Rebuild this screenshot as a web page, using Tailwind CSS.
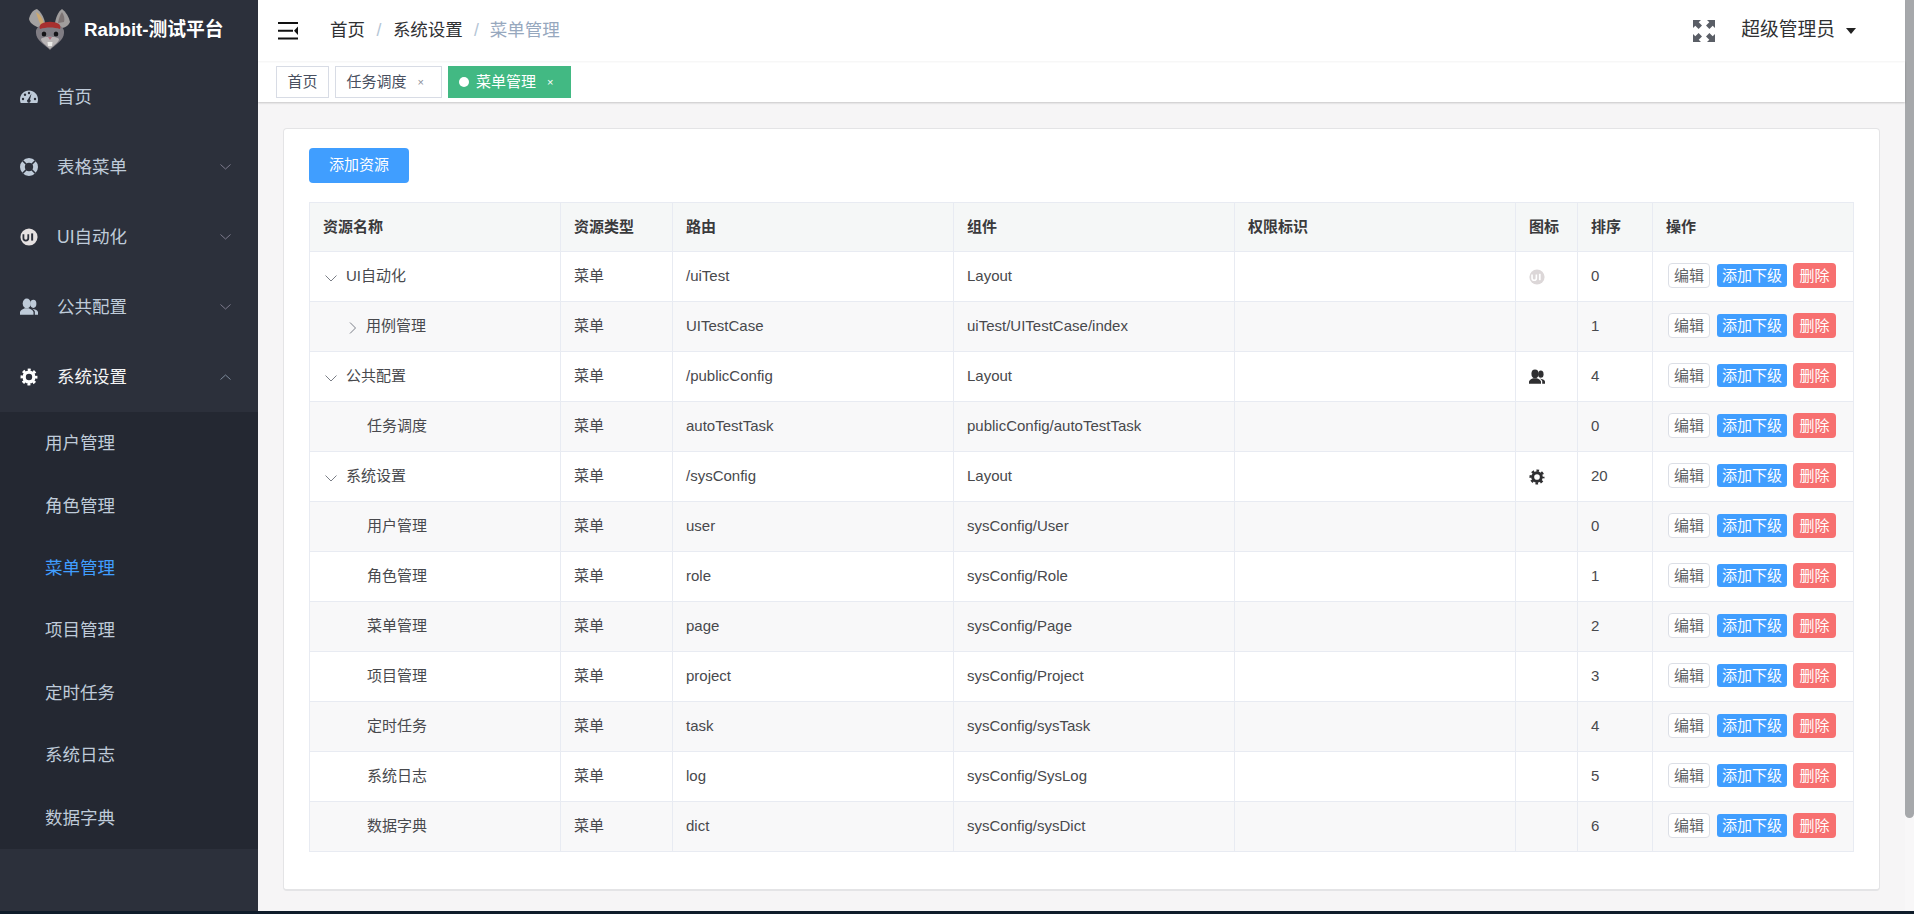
<!DOCTYPE html>
<html lang="zh-CN">
<head>
  <meta charset="UTF-8" />
  <title>Rabbit-测试平台</title>
  <script src="https://cdn.jsdelivr.net/npm/@tailwindcss/browser@4"></script>
</head>
<body class="h-[914px] overflow-hidden bg-[#0f1c2a] font-['Liberation_Sans','Noto_Sans_CJK_SC',sans-serif]">
  <svg class="hidden">
    <symbol id="i-users" viewBox="0 0 20 20">
      <ellipse cx="14.800" cy="6.500" rx="3.400" ry="4.500" />
      <path d="M13.500 12c3 .5 6 1.500 6.500 3.500v3h-3.500v-3.500c-.5-1-1.500-2-3-3z" />
      <ellipse cx="7.500" cy="6" rx="4.500" ry="5.500" />
      <path d="M0 18.500v-3c.5-2 3-3 5.300-4h4.400c2.300 1 4.800 2 5.300 4v3z" />
    </symbol>
    <symbol id="i-gear" viewBox="0 0 24 24">
      <circle cx="12" cy="12" r="6.500" fill="none" stroke="currentColor" stroke-width="4.500" />
      <circle cx="12" cy="12" r="9.500" fill="none" stroke="currentColor" stroke-width="3.600" stroke-dasharray="3.900 3.560" stroke-dashoffset="1.950" />
    </symbol>
    <symbol id="i-ui" viewBox="0 0 20 20">
      <circle cx="10" cy="10" r="9.500" />
      <path d="M3.800 7v4.500c0 1.700 1 2.500 2.700 2.500s2.700-.8 2.700-2.500V7" fill="none" stroke="currentColor" stroke-width="2" />
      <path d="M13.500 6v8" fill="none" stroke="currentColor" stroke-width="2.200" />
    </symbol>
  </svg>

  <div class="flex h-[911px]">
    <!-- Sidebar -->
    <aside class="flex w-[258px] shrink-0 flex-col bg-[#2c303b]">
      <div class="flex h-[62px] items-start">
        <svg class="ml-[28px] mt-[8px] h-[43px] w-[43px] shrink-0" viewBox="0 0 43 43">
          <path d="M13 20C8 19 2 16 1 11 2 6 5 2 9 1c4 3 7 8 8 14z" fill="#a3a1a1" />
          <path d="M13 18C11 13 9 8 8 4c4 2 7 7 8 12z" fill="#cda86f" />
          <path d="M27 15c1-6 3-11 7-14 4 3 7 8 8 13-2 4-5 6-10 6z" fill="#a09d9d" />
          <path d="M30 15c1-5 2-8 4-11 2 3 3 7 2 10z" fill="#7d7474" />
          <path d="M8 25c-1-6 6-10 14-10s15 4 14 10c0 7-9 12-14 17C17 37 8 32 8 25z" fill="#807d84" />
          <path d="M13 31c2-3 16-3 18 0 0 3-5 6-9 10-4-4-9-7-9-10z" fill="#b8b4b5" />
          <path d="M12 21c-1-2 0-4 1-5 5-3 13-3 18 0 1 1 2 3 1 5-6-2-14-2-20 0z" fill="#a8302f" />
          <ellipse cx="16" cy="26" rx="2.300" ry="2.500" fill="#141417" />
          <ellipse cx="28" cy="26" rx="2.300" ry="2.500" fill="#141417" />
          <path d="M20 29h4l-2 3z" fill="#b46f7d" />
          <path d="M19.500 34h5l-.5 4h-4z" fill="#ecebe8" />
        </svg>
        <span class="ml-[13px] mt-[19px] whitespace-nowrap text-[18.75px] leading-[22px] font-bold text-white">Rabbit-测试平台</span>
      </div>

      <nav class="text-[17.5px] text-[#bfcbd9]">
        <a class="flex h-[70px] items-center pl-[20px]">
          <svg class="h-[18px] w-[18px]" viewBox="0 0 18 18"><path d="M9 2.500C4 2.500 0 6.500 0 11.500c0 1.300.2 2.300.7 3.500h16.600c.5-1.200.7-2.200.7-3.500 0-5-4-9-9-9z" fill="currentColor" /><circle cx="3" cy="11" r="1.200" fill="#2c303b" /><circle cx="5" cy="6.800" r="1.200" fill="#2c303b" /><circle cx="9" cy="5" r="1.200" fill="#2c303b" /><circle cx="15" cy="11" r="1.200" fill="#2c303b" /><path d="M11.500 5.500 10 11.500a1.800 1.800 0 1 1-2-.2z" fill="#2c303b" /></svg>
          <span class="ml-[19px]">首页</span>
        </a>
        <a class="flex h-[70px] items-center pl-[20px]">
          <svg class="h-[18px] w-[18px]" viewBox="0 0 18 18"><circle cx="9" cy="9" r="6.600" fill="none" stroke="currentColor" stroke-width="4.800" /><path d="M2.500 2.500l4 4M15.500 2.500l-4 4M2.500 15.500l4-4M15.500 15.500l-4-4" stroke="#2c303b" stroke-width="1.600" /></svg>
          <span class="ml-[19px]">表格菜单</span>
          <svg class="ml-auto mr-[27px] h-[6px] w-[11px] text-[#7d7a8c]" viewBox="0 0 11 6"><path d="M.5.5l5 4.500 5-4.500" fill="none" stroke="currentColor" /></svg>
        </a>
        <a class="flex h-[70px] items-center pl-[20px]">
          <svg class="h-[18px] w-[18px] fill-[#e6e1e1] text-[#2c303b]"><use href="#i-ui" /></svg>
          <span class="ml-[19px]">UI自动化</span>
          <svg class="ml-auto mr-[27px] h-[6px] w-[11px] text-[#7d7a8c]" viewBox="0 0 11 6"><path d="M.5.5l5 4.500 5-4.500" fill="none" stroke="currentColor" /></svg>
        </a>
        <a class="flex h-[70px] items-center pl-[20px]">
          <svg class="h-[18px] w-[18px] fill-[#bfcbd9]"><use href="#i-users" /></svg>
          <span class="ml-[19px]">公共配置</span>
          <svg class="ml-auto mr-[27px] h-[6px] w-[11px] text-[#7d7a8c]" viewBox="0 0 11 6"><path d="M.5.5l5 4.500 5-4.500" fill="none" stroke="currentColor" /></svg>
        </a>
        <a class="flex h-[70px] items-center pl-[20px] text-[#f4f4f5]">
          <svg class="h-[18px] w-[18px] text-white"><use href="#i-gear" /></svg>
          <span class="ml-[19px]">系统设置</span>
          <svg class="ml-auto mr-[27px] h-[6px] w-[11px] text-[#7d8a9c]" viewBox="0 0 11 6"><path d="M.5 5.500l5-4.500 5 4.500" fill="none" stroke="currentColor" /></svg>
        </a>
        <div class="grid h-[437px] grid-rows-7 items-center bg-[#242832] pl-[45px]">
          <a>用户管理</a>
          <a>角色管理</a>
          <a class="text-[#409eff]">菜单管理</a>
          <a>项目管理</a>
          <a>定时任务</a>
          <a>系统日志</a>
          <a>数据字典</a>
        </div>
      </nav>
    </aside>

    <!-- Main column -->
    <div class="flex min-w-0 flex-1 flex-col bg-[#f6f5f6]">
      <header class="relative z-20 flex h-[61px] shrink-0 items-center bg-white pl-[20px] pr-[49px] shadow-[0_1px_2px_rgba(0,0,0,0.05)]">
        <svg class="h-[18px] w-[20px]" viewBox="0 0 20 18"><path d="M0 1h20M0 8.800h15M0 16.500h20" stroke="#111" stroke-width="2" /><path d="M20 4.500v8.500L16 8.800z" fill="#111" /></svg>
        <div class="ml-[32px] flex items-center text-[17.5px] text-[#303133]">
          <span>首页</span>
          <span class="mx-[11.5px] text-[#b4c5d6]">/</span>
          <span>系统设置</span>
          <span class="mx-[11px] text-[#b4c5d6]">/</span>
          <span class="text-[#97a8be]">菜单管理</span>
        </div>
        <svg class="ml-auto h-[22px] w-[22px]" viewBox="0 0 22 22" fill="#5a5e66"><path d="M0 0h8L5.700 2.300 9 5.600 5.600 9 2.300 5.700 0 8zM22 0v8l-2.300-2.300L16.400 9 13 5.600l3.300-3.300L14 0zM0 22v-8l2.300 2.300L5.600 13 9 16.400l-3.300 3.300L8 22zM22 22h-8l2.300-2.300L13 16.400l3.400-3.400 3.300 3.300L22 14z" /></svg>
        <span class="ml-[26px] text-[18.75px] text-[#303133]">超级管理员</span>
        <span class="ml-[11px] mt-[1px] h-0 w-0 border-x-[5px] border-t-[6px] border-x-transparent border-t-[#222]"></span>
      </header>

      <div class="relative z-10 flex h-[41px] shrink-0 items-start gap-[6px] bg-white pl-[18px] pt-[5px] text-[15px] leading-[30px] text-[#495060] shadow-[0_1px_2px_rgba(0,0,0,0.2)]">
        <span class="h-[32px] border border-[#d8dce5] px-[10.5px]">首页</span>
        <span class="flex h-[32px] items-center border border-[#d8dce5] pl-[10.500px] pr-[17px]">任务调度<span class="ml-[11px] text-[11px] text-[#8a8f99]">×</span></span>
        <span class="flex h-[32px] items-center bg-[#42b983] pl-[11px] pr-[17.600px] text-white"><i class="mr-[7px] h-[10px] w-[10px] rounded-full bg-white"></i>菜单管理<span class="ml-[11px] text-[11px]">×</span></span>
      </div>

      <main class="flex-1 pl-[25px] pr-[25px] pt-[26px]">
        <section class="h-[763px] rounded-[4px] border border-b-2 border-[#e4e4e6] bg-white pl-[25px] pr-[25px] pt-[19px]">
          <button class="h-[35px] w-[100px] rounded-[4px] bg-[#409eff] text-[15px] text-white">添加资源</button>
          <table class="mt-[19px] w-[1544px] table-fixed border-collapse text-[15px] text-[#48494d]">
            <colgroup>
              <col class="w-[251px]" /><col class="w-[112px]" /><col class="w-[281px]" /><col class="w-[281px]" /><col class="w-[281px]" /><col class="w-[62px]" /><col class="w-[75px]" /><col class="w-[201px]" />
            </colgroup>
            <thead class="bg-[#f5f7f7] text-left font-bold text-[#3a3a3c]">
              <tr class="h-[49px]">
                <th class="border border-[#e8ebf2] px-[13px]">资源名称</th>
                <th class="border border-[#e8ebf2] px-[13px]">资源类型</th>
                <th class="border border-[#e8ebf2] px-[13px]">路由</th>
                <th class="border border-[#e8ebf2] px-[13px]">组件</th>
                <th class="border border-[#e8ebf2] px-[13px]">权限标识</th>
                <th class="border border-[#e8ebf2] px-[13px]">图标</th>
                <th class="border border-[#e8ebf2] px-[13px]">排序</th>
                <th class="border border-[#e8ebf2] px-[13px]">操作</th>
              </tr>
            </thead>
            <tbody id="rows"></tbody>
          </table>
        </section>
      </main>
    </div>

    <!-- Page scrollbar -->
    <div class="w-[9px] shrink-0 bg-[#f8f7f8]">
      <div class="h-[818px] rounded-b-[5px] bg-[#a6a8ab]"></div>
    </div>
  </div>

  <script>
    const data = [
      { name: "UI自动化", arrow: "down", path: "/uiTest", comp: "Layout", icon: "ui", sort: 0 },
      { name: "用例管理", arrow: "right", path: "UITestCase", comp: "uiTest/UITestCase/index", sort: 1 },
      { name: "公共配置", arrow: "down", path: "/publicConfig", comp: "Layout", icon: "users", sort: 4 },
      { name: "任务调度", path: "autoTestTask", comp: "publicConfig/autoTestTask", sort: 0 },
      { name: "系统设置", arrow: "down", path: "/sysConfig", comp: "Layout", icon: "gear", sort: 20 },
      { name: "用户管理", path: "user", comp: "sysConfig/User", sort: 0 },
      { name: "角色管理", path: "role", comp: "sysConfig/Role", sort: 1 },
      { name: "菜单管理", path: "page", comp: "sysConfig/Page", sort: 2 },
      { name: "项目管理", path: "project", comp: "sysConfig/Project", sort: 3 },
      { name: "定时任务", path: "task", comp: "sysConfig/sysTask", sort: 4 },
      { name: "系统日志", path: "log", comp: "sysConfig/SysLog", sort: 5 },
      { name: "数据字典", path: "dict", comp: "sysConfig/sysDict", sort: 6 },
    ];

    const icons = {
      ui: '<svg class="h-[16px] w-[16px] fill-[#dcd7d8] text-white"><use href="#i-ui" /></svg>',
      users: '<svg class="h-[16px] w-[16px] fill-[#2f2f31]"><use href="#i-users" /></svg>',
      gear: '<svg class="h-[16px] w-[16px] text-[#2f2f31]"><use href="#i-gear" /></svg>',
    };

    const arrows = {
      down: '<svg class="ml-[2px] mr-[9px] mt-[3px] h-[12px] w-[12px] shrink-0" viewBox="0 0 12 12"><path d="M.5 3.500l5.500 5.500 5.500-5.500" fill="none" stroke="#7b7f87" /></svg>',
      right: '<svg class="ml-[24px] mr-[7px] mt-[3px] h-[12px] w-[12px] shrink-0" viewBox="0 0 12 12"><path d="M3 .5l5.500 5.500-5.500 5.500" fill="none" stroke="#7b7f87" /></svg>',
      none: '<span class="ml-[44px]"></span>',
    };

    const cell = "border border-[#e8ebf2] px-[13px]";
    document.getElementById("rows").innerHTML = data.map((row, i) => `
      <tr class="h-[50px] ${i % 2 ? "bg-[#f8f8f9]" : "bg-white"}">
        <td class="${cell}"><div class="flex items-center">${arrows[row.arrow || "none"]}<span>${row.name}</span></div></td>
        <td class="${cell}">菜单</td>
        <td class="${cell}">${row.path}</td>
        <td class="${cell}">${row.comp}</td>
        <td class="${cell}"></td>
        <td class="${cell}">${row.icon ? icons[row.icon] : ""}</td>
        <td class="${cell}">${row.sort}</td>
        <td class="${cell}">
          <div class="mb-[2px] flex items-center pl-[2px] text-[15px] leading-[21px]">
            <button class="h-[25px] w-[42px] rounded-[4px] border border-[#dcdfe6] bg-white text-[#606266]">编辑</button>
            <button class="ml-[7px] h-[23px] w-[70px] rounded-[3px] bg-[#409eff] text-white">添加下级</button>
            <button class="ml-[6px] h-[25px] w-[43px] rounded-[4px] bg-[#f77070] text-white">删除</button>
          </div>
        </td>
      </tr>`).join("");
  </script>
</body>
</html>
